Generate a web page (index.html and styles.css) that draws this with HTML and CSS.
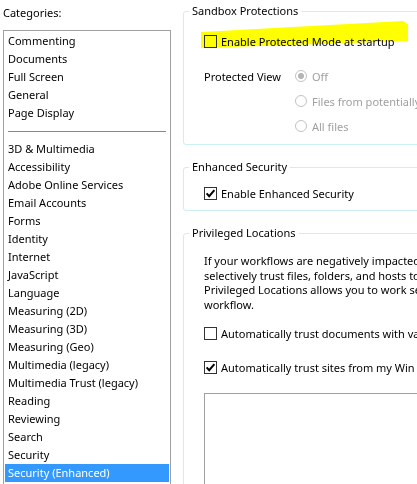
FILE: index.html
```html
<!DOCTYPE html>
<html>
<head>
<meta charset="utf-8">
<link rel="stylesheet" href="styles.css">
</head>
<body>
<div class="page">
  <div class="left">
    <div class="cat-label">Categories:</div>
    <div class="listbox">
      <div class="item">Commenting</div>
      <div class="item">Documents</div>
      <div class="item">Full Screen</div>
      <div class="item">General</div>
      <div class="item">Page Display</div>
      <div class="sep"></div>
      <div class="item">3D &amp; Multimedia</div>
      <div class="item">Accessibility</div>
      <div class="item">Adobe Online Services</div>
      <div class="item">Email Accounts</div>
      <div class="item">Forms</div>
      <div class="item">Identity</div>
      <div class="item">Internet</div>
      <div class="item">JavaScript</div>
      <div class="item">Language</div>
      <div class="item">Measuring (2D)</div>
      <div class="item">Measuring (3D)</div>
      <div class="item">Measuring (Geo)</div>
      <div class="item">Multimedia (legacy)</div>
      <div class="item">Multimedia Trust (legacy)</div>
      <div class="item">Reading</div>
      <div class="item">Reviewing</div>
      <div class="item">Search</div>
      <div class="item">Security</div>
      <div class="item selected">Security (Enhanced)</div>
    </div>
  </div>
  <div class="right">
    <div class="group g1">
      <div class="gtitle">Sandbox Protections</div>
      <div class="row check-row first-check">
        <span class="cb"></span><span>Enable Protected Mode at startup</span>
      </div>
      <div class="pv">
        <div class="pv-label">Protected View</div>
        <div class="radios">
          <div class="row radio-row"><span class="radio on"></span><span>Off</span></div>
          <div class="row radio-row"><span class="radio"></span><span>Files from potentially unsafe locations</span></div>
          <div class="row radio-row"><span class="radio"></span><span>All files</span></div>
        </div>
      </div>
    </div>
    <div class="group g2">
      <div class="gtitle">Enhanced Security</div>
      <div class="row check-row es-check">
        <span class="cb checked"><svg viewBox="0 0 11 11" width="11" height="11"><path d="M1.6 5.4 L4.2 8.2 L9.4 2.2" fill="none" stroke="#000" stroke-width="2"/></svg></span><span>Enable Enhanced Security</span>
      </div>
    </div>
    <div class="group g3">
      <div class="gtitle">Privileged Locations</div>
      <div class="para">
        <div class="pline">If your workflows are negatively impacted by security settings, you can</div>
        <div class="pline">selectively trust files, folders, and hosts to bypass those restrictions.</div>
        <div class="pline">Privileged Locations allows you to work securely while preserving your</div>
        <div class="pline">workflow.</div>
      </div>
      <div class="row check-row pl-check1">
        <span class="cb"></span><span>Automatically trust documents with valid certification</span>
      </div>
      <div class="row check-row pl-check2">
        <span class="cb checked"><svg viewBox="0 0 11 11" width="11" height="11"><path d="M1.6 5.4 L4.2 8.2 L9.4 2.2" fill="none" stroke="#000" stroke-width="2"/></svg></span><span>Automatically trust sites from my Win OS security zones</span>
      </div>
      <div class="locbox"></div>
    </div>
    <div class="highlight"></div>
  </div>
</div>
</body>
</html>
```

FILE: styles.css
```css
html, body {
  margin: 0;
  padding: 0;
  background: #fff;
}
body {
  width: 417px;
  height: 484px;
  overflow: hidden;
  font-family: "Noto Sans", "DejaVu Sans", sans-serif;
  font-size: 11px;
  color: #000;
}
.page {
  display: flex;
  width: 417px;
  height: 484px;
  overflow: hidden;
}
.left {
  width: 183px;
  flex: 0 0 183px;
  padding: 4px 0 0 3px;
  box-sizing: border-box;
}
.cat-label {
  line-height: 16px;
  height: 16px;
  padding-top: 1px;
  box-sizing: border-box;
}
.listbox {
  margin-top: 10px;
  width: 168px;
  height: 480px;
  box-sizing: border-box;
  border: 1px solid #a0a0a0;
  padding-top: 1px;
}
.item {
  line-height: 18px;
  height: 18px;
  margin: 0 1px;
  padding: 0 0 0 3px;
  box-sizing: border-box;
  white-space: nowrap;
}
.item.selected {
  background: #3399ff;
  color: #fff;
}
.sep {
  height: 18px;
  display: flex;
  align-items: center;
  padding: 0 4px;
}
.sep::before {
  content: "";
  display: block;
  flex: 1;
  height: 1px;
  background: #4a98dc;
}
.right {
  position: relative;
  flex: 0 0 260px;
  width: 260px;
}
.group {
  border: 1px solid #cdeef4;
  border-radius: 3px;
  padding-left: 20px;
  width: 260px;
  box-sizing: border-box;
}
.gtitle {
  display: table;
  margin: -9px 0 0 -15px;
  padding: 0 3px;
  height: 16px;
  box-sizing: border-box;
  line-height: 16px;
  background: #fff;
  white-space: nowrap;
}
.g1 {
  margin-top: 11px;
  padding-bottom: 9px;
}
.g2 {
  margin-top: 22px;
  padding-bottom: 8px;
}
.g3 {
  margin-top: 22px;
  height: 300px;
}
.row {
  display: flex;
  align-items: center;
  height: 18px;
  white-space: nowrap;
}
.row > span:last-child {
  padding-top: 1px;
}
.cb {
  width: 13px;
  height: 13px;
  box-sizing: border-box;
  border: 1px solid #333;
  margin-right: 4px;
  flex: 0 0 13px;
  display: flex;
  align-items: center;
  justify-content: center;
}
.first-check { margin-top: 13px; }
.es-check { margin-top: 9px; }
.pv {
  display: grid;
  grid-template-columns: 91px auto;
  margin-top: 17px;
}
.pv-label {
  line-height: 18px;
  height: 18px;
  padding-top: 1px;
  box-sizing: border-box;
  white-space: nowrap;
}
.radios {
  display: flex;
  flex-direction: column;
  gap: 7px;
}
.radio-row { color: #a0a0a0; }
.radio {
  width: 12px;
  height: 12px;
  box-sizing: border-box;
  border: 1px solid #c2c2c2;
  border-radius: 50%;
  margin-right: 5px;
  flex: 0 0 12px;
  display: flex;
  align-items: center;
  justify-content: center;
}
.radio.on::after {
  content: "";
  width: 6px;
  height: 6px;
  border-radius: 50%;
  background: #b4b4b4;
}
.para {
  margin-top: 13px;
}
.pline {
  height: 14.5px;
  line-height: 14.5px;
  white-space: nowrap;
}
.pl-check1 { margin-top: 12px; }
.pl-check2 { margin-top: 16px; }
.locbox {
  margin-top: 17px;
  width: 300px;
  height: 150px;
  border: 1px solid #a0a0a0;
  box-sizing: border-box;
}
.highlight {
  position: absolute;
  left: 18px;
  top: 21px;
  width: 207px;
  height: 28px;
  background: #ffff00;
  mix-blend-mode: multiply;
  clip-path: polygon(0 11px, 202px 0, 207px 3px, 207px 20px, 0 27px);
}
```
